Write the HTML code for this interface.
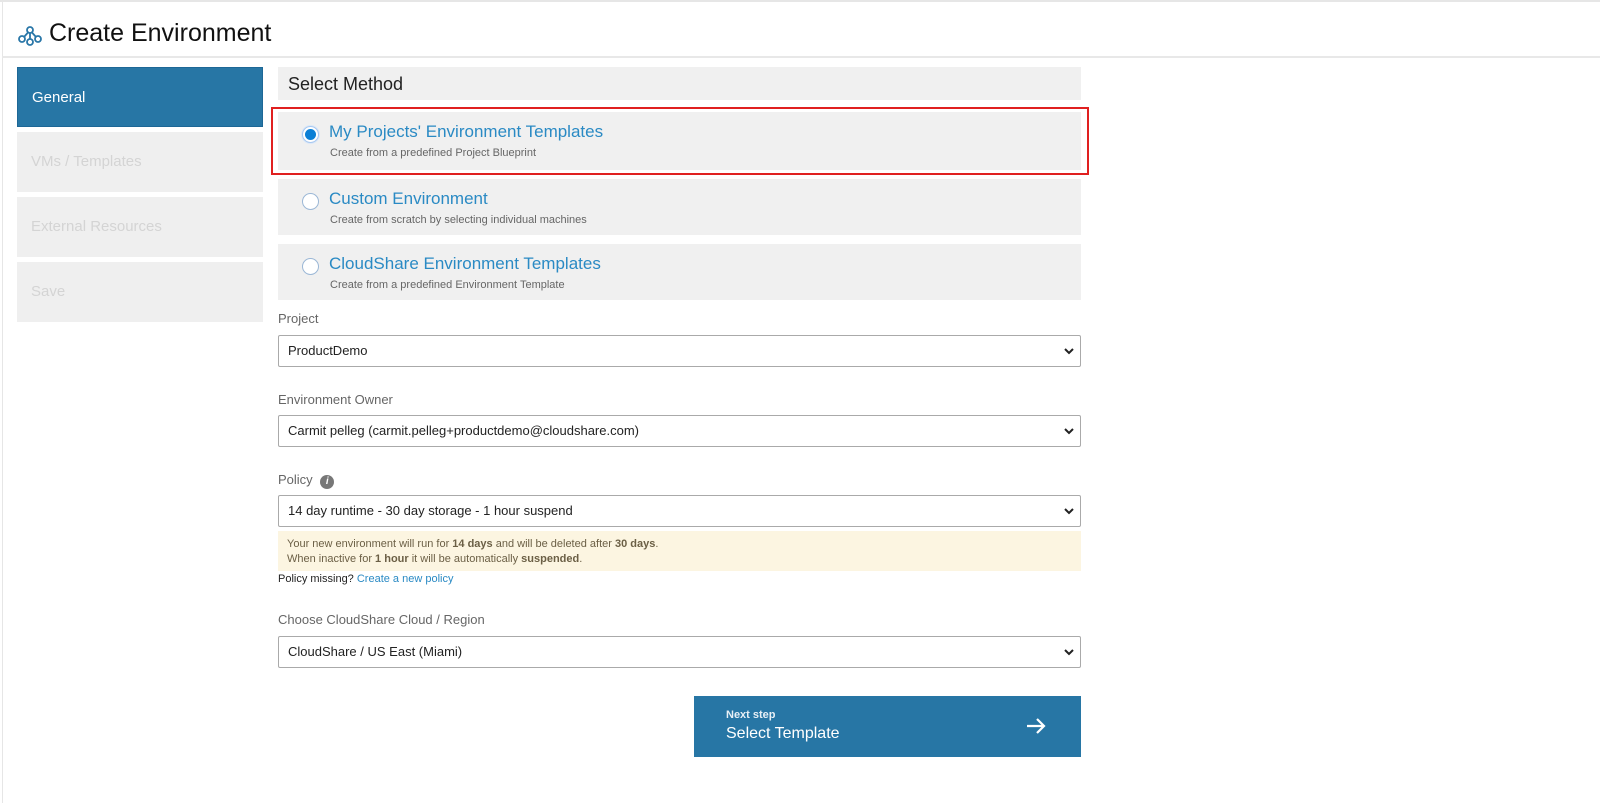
<!DOCTYPE html>
<html><head><style>
*{box-sizing:border-box;margin:0;padding:0}
body{width:1600px;height:803px;background:#fff;font-family:"Liberation Sans",sans-serif;position:relative;overflow:hidden;color:#222}
.abs{position:absolute}
.side{left:17px;width:246px;height:60px;background:#efefef;color:#d4d4d4;font-size:15px;padding:0 14px;line-height:60px}
.opt{left:278px;width:803px;background:#f0f0f0}
.radio{position:absolute;left:24px;top:14px;width:17px;height:17px;border-radius:50%;border:1px solid #9bb7d6;background:#fff}
.ot{position:absolute;left:51px;top:10px;font-size:17px;color:#2a8ac4}
.os{position:absolute;left:52px;top:35px;font-size:11px;color:#666}
.lbl{left:278px;font-size:13px;color:#666}
.sel{left:278px;width:803px;height:32px;border:1px solid #aaa;border-radius:2px;font-size:13px;line-height:30px;padding-left:9px;color:#222}
.sel svg{position:absolute;right:6px;top:11px}
</style></head><body>
<div class="abs" style="left:0;top:0;width:1600px;height:2px;background:#e6e6e6"></div>
<div class="abs" style="left:2px;top:0;width:1px;height:803px;background:#e6e6e6"></div>
<div class="abs" style="left:2px;top:56px;width:1598px;height:2px;background:#e8e8e8"></div>
<svg class="abs" style="left:18px;top:26px" width="26" height="20" viewBox="0 0 26 20" fill="none" stroke="#2a77a8" stroke-width="1.8"><circle cx="12" cy="4" r="3"/><circle cx="4" cy="13" r="3"/><circle cx="20" cy="13" r="3"/><circle cx="12" cy="16" r="3"/><path d="M10 6.5 6 11M14 6.5 18 11M12 7v6"/></svg>
<div class="abs" style="left:49px;top:19px;font-size:25px;color:#111">Create Environment</div>
<div class="abs side" style="top:67px;background:#2776a5;color:#fff;border:1px solid #1d6796">General</div>
<div class="abs side" style="top:132px">VMs / Templates</div>
<div class="abs side" style="top:197px">External Resources</div>
<div class="abs side" style="top:262px">Save</div>
<div class="abs" style="left:278px;top:67px;width:803px;height:33px;background:#f0f0f0;font-size:18px;padding:7px 10px;color:#222">Select Method</div>
<div class="abs" style="left:271px;top:107px;width:818px;height:68px;border:2px solid #e02020"></div>
<div class="abs opt" style="top:112px;height:58px"><div class="radio" style="border:1px solid #a8c8f0;box-shadow:0 0 0 1px #dbe8f8"><div style="position:absolute;left:2px;top:2px;width:11px;height:11px;border-radius:50%;background:#0a7fd6"></div></div><div class="ot">My Projects' Environment Templates</div><div class="os">Create from a predefined Project Blueprint</div></div>
<div class="abs opt" style="top:179px;height:56px"><div class="radio"></div><div class="ot">Custom Environment</div><div class="os">Create from scratch by selecting individual machines</div></div>
<div class="abs opt" style="top:244px;height:56px"><div class="radio"></div><div class="ot">CloudShare Environment Templates</div><div class="os">Create from a predefined Environment Template</div></div>
<div class="abs lbl" style="top:311px">Project</div>
<div class="abs sel" style="top:335px">ProductDemo<svg width="10" height="8" viewBox="0 0 10 8"><path d="M1 2l4 4 4-4" stroke="#222" stroke-width="2" fill="none"/></svg></div>
<div class="abs lbl" style="top:392px">Environment Owner</div>
<div class="abs sel" style="top:415px">Carmit pelleg (carmit.pelleg+productdemo@cloudshare.com)<svg width="10" height="8" viewBox="0 0 10 8"><path d="M1 2l4 4 4-4" stroke="#222" stroke-width="2" fill="none"/></svg></div>
<div class="abs lbl" style="top:472px">Policy <span style="display:inline-block;width:14px;height:14px;border-radius:50%;background:#777;color:#fff;font-size:10px;font-style:italic;font-weight:bold;text-align:center;line-height:14px;margin-left:4px">i</span></div>
<div class="abs sel" style="top:495px">14 day runtime - 30 day storage - 1 hour suspend<svg width="10" height="8" viewBox="0 0 10 8"><path d="M1 2l4 4 4-4" stroke="#222" stroke-width="2" fill="none"/></svg></div>
<div class="abs" style="left:278px;top:531px;width:803px;height:40px;background:#fcf5e1;font-size:11px;color:#6b5f45;padding:6px 9px;line-height:15px">Your new environment will run for <b>14 days</b> and will be deleted after <b>30 days</b>.<br>When inactive for <b>1 hour</b> it will be automatically <b>suspended</b>.</div>
<div class="abs" style="left:278px;top:573px;font-size:11px;color:#222">Policy missing? <span style="color:#2a8ac4">Create a new policy</span></div>
<div class="abs lbl" style="top:612px">Choose CloudShare Cloud / Region</div>
<div class="abs sel" style="top:636px">CloudShare / US East (Miami)<svg width="10" height="8" viewBox="0 0 10 8"><path d="M1 2l4 4 4-4" stroke="#222" stroke-width="2" fill="none"/></svg></div>
<div class="abs" style="left:694px;top:696px;width:387px;height:61px;background:#2776a5;color:#fff">
<div style="position:absolute;left:32px;top:13px;font-size:11px;font-weight:bold;color:#e8f0f6">Next step</div>
<div style="position:absolute;left:32px;top:29px;font-size:16px">Select Template</div>
<svg style="position:absolute;left:332px;top:21px" width="20" height="18" viewBox="0 0 20 18" fill="none" stroke="#fff" stroke-width="2.2"><path d="M1 9h17M11 2l7 7-7 7"/></svg>
</div>
</body></html>
